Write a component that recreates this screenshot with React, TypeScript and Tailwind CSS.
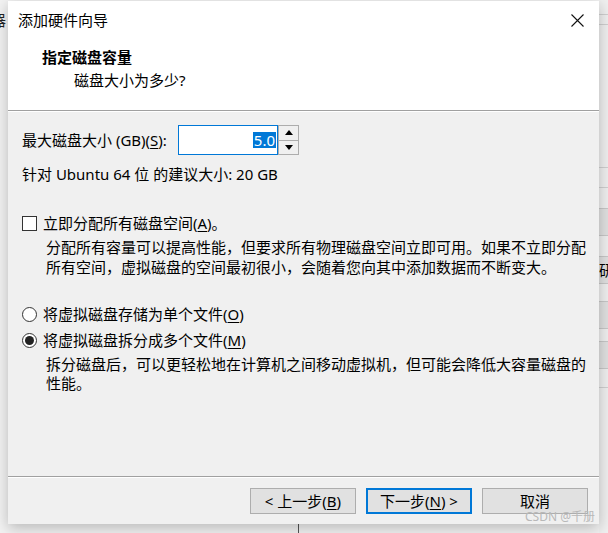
import React from 'react';

const font = { fontFamily: '"Noto Sans", "Noto Sans CJK SC", sans-serif' };

const Key = ({ k }: { k: string }) => <span className="underline underline-offset-2">{k}</span>;

const Radio = ({ checked }: { checked?: boolean }) => (
  <span className="flex h-[15px] w-[15px] shrink-0 items-center justify-center rounded-full border border-[#333] bg-white">
    {checked && <span className="h-[9px] w-[9px] rounded-full bg-[#222]" />}
  </span>
);

const Button = ({ children, primary }: { children: React.ReactNode; primary?: boolean }) => (
  <button
    className={
      primary
        ? 'flex h-[26px] w-[106px] items-center justify-center border-2 border-[#0078d7] bg-[#e1e1e1] text-[15px] text-black'
        : 'flex h-[26px] w-[106px] items-center justify-center border border-[#adadad] bg-[#e1e1e1] text-[15px] text-black'
    }
  >
    {children}
  </button>
);

export default function App() {
  return (
    <div className="relative h-[533px] w-[608px] overflow-hidden bg-[#f3f3f3] text-black" style={font}>
      {/* desktop behind the dialog */}
      <div className="absolute left-0 top-[8px] text-[15px] leading-[24px] text-[#222]">
        <span className="-ml-[9px]">器</span>
      </div>
      <div className="absolute right-0 top-0 flex h-full w-[9px] flex-col bg-[#f0f0f0]">
        <div className="mt-[14px] h-px bg-[#d0d0d0]" />
        <div className="mt-[9px] h-px bg-[#d0d0d0]" />
        <div className="mt-[142px] h-px bg-[#d0d0d0]" />
        <div className="mt-[19px] h-px bg-[#d0d0d0]" />
        <div className="mt-[20px] h-[28px] border-y border-[#c8c8c8] bg-[#e1e1e1]" />
        <div className="mt-[20px] h-[28px] overflow-hidden border-y border-[#c8c8c8] bg-[#e1e1e1] text-[15px] leading-[26px]">研</div>
        <div className="mt-[17px] h-[28px] border-y border-[#c8c8c8] bg-[#e1e1e1]" />
        <div className="mt-[12px] h-[28px] border-y border-[#c8c8c8] bg-[#e1e1e1]" />
        <div className="mt-[18px] h-px bg-[#d0d0d0]" />
      </div>
      <div className="absolute left-[298px] top-[524px] h-[9px] w-px bg-[#555]" />

      {/* dialog window */}
      <div className="relative ml-[8px] mt-[1px] flex h-[523px] w-[591px] flex-col bg-[#f0f0f0] shadow-[0_4px_14px_rgba(0,0,0,0.25)]">
        <div className="flex h-[109px] flex-col bg-white">
          <div className="flex h-[38px] items-center justify-between pl-[10px] pr-[14px]">
            <span className="text-[15px] text-black">添加硬件向导</span>
            <svg width="13" height="13" viewBox="0 0 13 13" className="mr-[1px]">
              <path d="M0.5 0.5L12.5 12.5M12.5 0.5L0.5 12.5" stroke="#111" strokeWidth="1.1" />
            </svg>
          </div>
          <div className="mt-[8px] pl-[34px] text-[15px] font-bold leading-[20px]">指定磁盘容量</div>
          <div className="mt-[3px] pl-[66px] text-[15px] leading-[20px]">磁盘大小为多少?</div>
        </div>
        <div className="h-px bg-[#a0a0a0]" />
        <div className="h-px bg-white" />

        <div className="flex flex-1 flex-col pl-[14px] pr-[10px] text-[15px] leading-[20px]">
          <div className="mt-[13px] flex items-center">
            <span className="w-[156px]">
              最大磁盘大小 (GB)(<Key k="S" />):
            </span>
            <div className="flex h-[30px] w-[100px] items-center justify-end border border-[#0078d7] bg-white pr-[1px]">
              <span className="bg-[#0078d7] px-[1px] leading-[16px] text-white">5.0</span>
            </div>
            <div className="flex h-[30px] w-[21px] flex-col border border-[#adadad] bg-[#f0f0f0]">
              <div className="flex flex-1 items-center justify-center border-b border-[#adadad]">
                <svg width="8" height="5" viewBox="0 0 8 5"><path d="M0 5L4 0L8 5Z" fill="#000" /></svg>
              </div>
              <div className="flex flex-1 items-center justify-center">
                <svg width="8" height="5" viewBox="0 0 8 5"><path d="M0 0L8 0L4 5Z" fill="#000" /></svg>
              </div>
            </div>
          </div>
          <div className="mt-[9px]">针对 Ubuntu 64 位 的建议大小: 20 GB</div>

          <div className="mt-[29px] flex items-center gap-[6px]">
            <span className="h-[15px] w-[15px] shrink-0 border border-[#333] bg-white" />
            <span>
              立即分配所有磁盘空间(<Key k="A" />)。
            </span>
          </div>
          <p className="mt-[4px] pl-[24px] leading-[20px]">
            分配所有容量可以提高性能，但要求所有物理磁盘空间立即可用。如果不立即分配
            <br />
            所有空间，虚拟磁盘的空间最初很小，会随着您向其中添加数据而不断变大。
          </p>

          <div className="mt-[27px] flex items-center gap-[6px]">
            <Radio />
            <span>
              将虚拟磁盘存储为单个文件(<Key k="O" />)
            </span>
          </div>
          <div className="mt-[6px] flex items-center gap-[6px]">
            <Radio checked />
            <span>
              将虚拟磁盘拆分成多个文件(<Key k="M" />)
            </span>
          </div>
          <p className="mt-[5px] pl-[24px] leading-[19px]">
            拆分磁盘后，可以更轻松地在计算机之间移动虚拟机，但可能会降低大容量磁盘的
            <br />
            性能。
          </p>
        </div>

        <div className="h-px bg-[#a0a0a0]" />
        <div className="h-px bg-white" />
        <div className="flex h-[46px] items-start gap-[10px] pl-[242px] pt-[10px]">
          <Button>
            &lt; 上一步(<Key k="B" />)
          </Button>
          <Button primary>
            下一步(<Key k="N" />) &gt;
          </Button>
          <Button>取消</Button>
        </div>
      </div>

      <div className="absolute left-[525px] top-[509px] text-[12px] leading-[16px] text-[#b8b8b8]">CSDN @千册</div>
    </div>
  );
}
